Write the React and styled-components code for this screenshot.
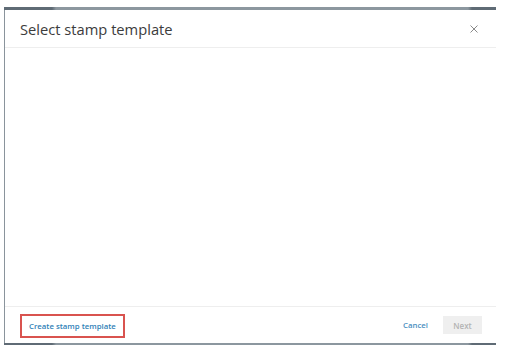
import React from "react";
import styled, { createGlobalStyle } from "styled-components";

const GlobalStyle = createGlobalStyle`
  html, body {
    margin: 0;
    padding: 0;
    background: #ffffff;
  }
  body {
    font-family: "Open Sans", "Noto Sans", sans-serif;
  }
`;

const Page = styled.div`
  width: 518px;
  height: 353px;
  padding: 7px 22px 0 4px;
  box-sizing: border-box;
`;

const Dialog = styled.div`
  display: flex;
  flex-direction: column;
  height: 338px;
  box-sizing: border-box;
  background: #fff;
  border-left: 1px solid #8a949c;
  position: relative;

  &::before,
  &::after {
    content: "";
    position: absolute;
    left: -1px;
    right: 0;
    background: linear-gradient(
      90deg,
      #5f6b75 0,
      #5f6b75 48px,
      #8c979f 52px,
      #8c979f 464px,
      #5f6b75 468px
    );
  }
  &::before {
    top: 0;
    height: 3px;
  }
  &::after {
    bottom: 0;
    height: 2px;
  }
`;

const Header = styled.div`
  display: flex;
  align-items: center;
  justify-content: space-between;
  height: 37px;
  margin-top: 3px;
  padding: 0 17px 0 15px;
  border-bottom: 1px solid #eeeeee;
`;

const Title = styled.h1`
  margin: 0;
  font-size: 14.7px;
  font-weight: 400;
  color: #3c3c3c;
`;

const CloseButton = styled.button`
  display: flex;
  align-items: center;
  justify-content: center;
  width: 10px;
  height: 10px;
  padding: 0;
  border: none;
  background: none;
  cursor: pointer;
  margin-top: 1px;
`;

const Body = styled.div`
  flex: 1;
`;

const Footer = styled.div`
  display: flex;
  align-items: center;
  height: 36px;
  padding: 0 14px 2px 15px;
  border-top: 1px solid #eeeeee;
`;

const Highlight = styled.div`
  display: flex;
  align-items: center;
  height: 24px;
  padding: 0 7px;
  box-sizing: border-box;
  border: 2px solid #d9534f;
  margin-top: 1px;
`;

const LinkButton = styled.button`
  padding: 0;
  border: none;
  background: none;
  font-family: inherit;
  font-size: 7.8px;
  font-weight: 600;
  color: ${(p) => (p.$muted ? "#4b8fbf" : "#2f7fb7")};
  cursor: pointer;
`;

const Spacer = styled.div`
  flex: 1;
`;

const NextButton = styled.button`
  width: 39px;
  height: 18px;
  margin-left: 15px;
  border: none;
  background: #efefef;
  font-family: inherit;
  font-size: 8px;
  font-weight: 600;
  color: #b3b3b3;
`;

export default function App() {
  return (
    <>
      <GlobalStyle />
      <Page>
        <Dialog>
          <Header>
            <Title>Select stamp template</Title>
            <CloseButton aria-label="Close">
              <svg width="8" height="8" viewBox="0 0 8 8">
                <path d="M0.5 0.5 L7.5 7.5 M7.5 0.5 L0.5 7.5" stroke="#8a8a8a" strokeWidth="1" />
              </svg>
            </CloseButton>
          </Header>
          <Body />
          <Footer>
            <Highlight>
              <LinkButton>Create stamp template</LinkButton>
            </Highlight>
            <Spacer />
            <LinkButton $muted>Cancel</LinkButton>
            <NextButton disabled>Next</NextButton>
          </Footer>
        </Dialog>
      </Page>
    </>
  );
}
